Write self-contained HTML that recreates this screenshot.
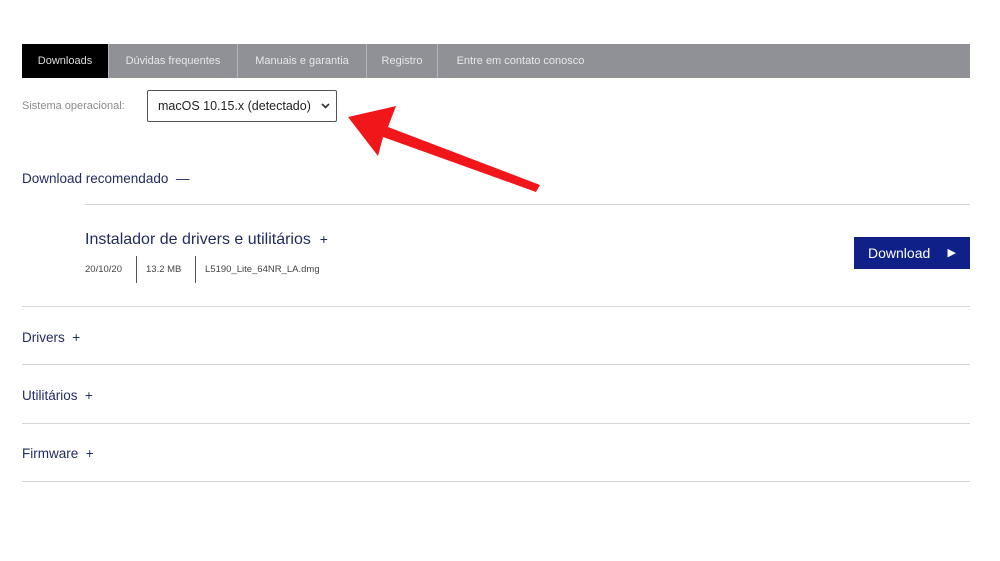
<!DOCTYPE html>
<html><head><meta charset="utf-8"><style>
*{margin:0;padding:0;box-sizing:border-box}
body{width:1000px;height:561px;background:#fff;font-family:"Liberation Sans",sans-serif;position:relative;overflow:hidden;color:#1f2a5e}
.abs{position:absolute}
.tabs{left:22px;top:44px;width:948px;height:34px;background:#8f9197;display:flex}
.tab{height:34px;line-height:34px;font-size:11px;color:#e8e8ea;text-align:center;border-right:1px solid #b4b6bb;white-space:nowrap}
.line{height:1px;background:#d6d6d8}
.h{font-size:13.5px;color:#1f2a5e}
</style></head><body>
<div class="abs tabs">
 <div class="tab" style="width:87px;background:#000;color:#ddd">Downloads</div>
 <div class="tab" style="width:129px">Dúvidas frequentes</div>
 <div class="tab" style="width:129px">Manuais e garantia</div>
 <div class="tab" style="width:71px">Registro</div>
 <div class="tab" style="width:165px;border-right:none">Entre em contato conosco</div>
</div>
<div class="abs" style="left:22px;top:100px;font-size:11px;color:#8a8a8e">Sistema operacional:</div>
<div class="abs" style="left:147px;top:90px;width:190px;height:32px;border:1px solid #555;border-radius:2px;font-size:12.5px;color:#222;line-height:30px;padding-left:10px">macOS 10.15.x (detectado)<svg style="position:absolute;right:6px;top:12px" width="9" height="6"><path d="M1 1 L4.5 4.5 L8 1" stroke="#333" stroke-width="1.6" fill="none"/></svg></div>
<svg class="abs" style="left:0;top:0" width="1000" height="561"><polygon points="348,117 396,106 388,127 540,185 536,192 383,137 378,156" fill="#f0161a"/></svg>
<div class="abs h" style="left:22px;top:171px">Download recomendado &nbsp;—</div>
<div class="abs line" style="left:85px;top:204px;width:885px"></div>
<div class="abs" style="left:85px;top:231px;font-size:16px;color:#1f2a5e">Instalador de drivers e utilitários &nbsp;<span style="font-size:14px">+</span></div>
<div class="abs" style="left:85px;top:264px;font-size:9.5px;color:#444">20/10/20</div>
<div class="abs" style="left:136px;top:256px;width:1px;height:27px;background:#555"></div>
<div class="abs" style="left:146px;top:264px;font-size:9.5px;color:#444">13.2 MB</div>
<div class="abs" style="left:195px;top:256px;width:1px;height:27px;background:#555"></div>
<div class="abs" style="left:205px;top:264px;font-size:9.5px;color:#444">L5190_Lite_64NR_LA.dmg</div>
<div class="abs" style="left:854px;top:237px;width:116px;height:32px;background:#0f2088;color:#fff;font-size:14px;line-height:32px;padding-left:14px">Download <span style="position:absolute;right:14px;top:0;font-size:11px">&#9654;</span></div>
<div class="abs line" style="left:22px;top:306px;width:948px"></div>
<div class="abs h" style="left:22px;top:330px">Drivers &nbsp;+</div>
<div class="abs line" style="left:22px;top:364px;width:948px"></div>
<div class="abs h" style="left:22px;top:388px">Utilitários &nbsp;+</div>
<div class="abs line" style="left:22px;top:423px;width:948px"></div>
<div class="abs h" style="left:22px;top:446px">Firmware &nbsp;+</div>
<div class="abs line" style="left:22px;top:481px;width:948px"></div>
</body></html>
